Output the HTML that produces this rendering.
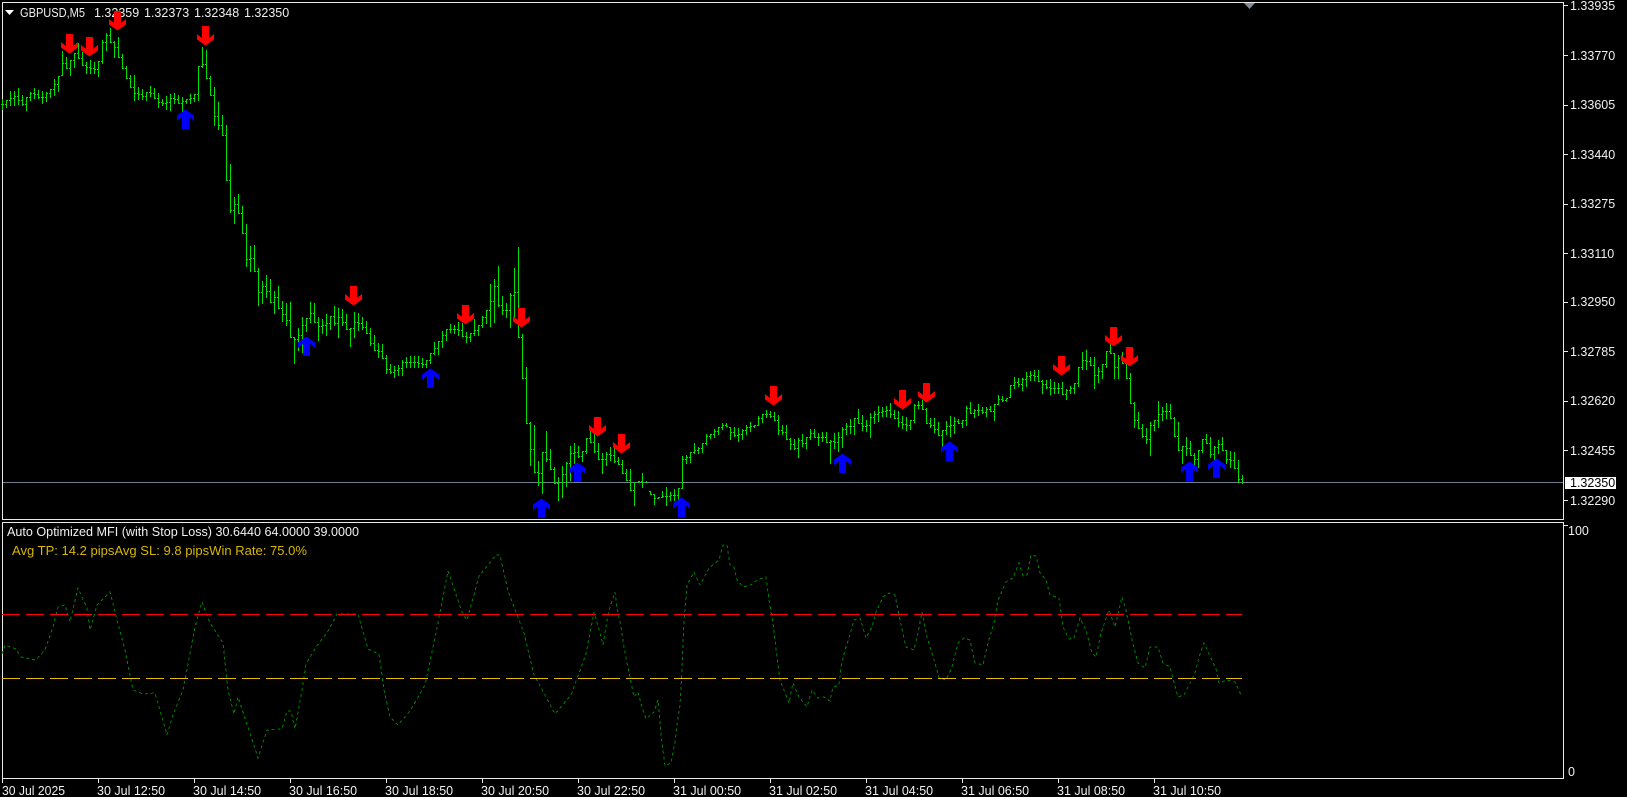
<!DOCTYPE html>
<html><head><meta charset="utf-8"><title>GBPUSD,M5</title>
<style>
html,body{margin:0;padding:0;background:#000;width:1627px;height:797px;overflow:hidden}
svg{position:absolute;left:0;top:0;display:block}
text{font-family:"Liberation Sans",sans-serif;font-size:12.5px;fill:#f0f0f0}
</style></head><body>
<svg width="1627" height="797" viewBox="0 0 1627 797" xmlns="http://www.w3.org/2000/svg">
<defs>
<polygon id="dn" points="-3.5,0 3.5,0 3.5,12 8.5,8 8.5,13.5 0,19.5 -8.5,13.5 -8.5,8 -3.5,12"/>
<polygon id="up" points="0,-0.5 8.5,5.5 8.5,11 3.5,7 3.5,19 -3.5,19 -3.5,7 -8.5,11 -8.5,5.5"/>
</defs>
<g fill="none" stroke="#e8e8e8" stroke-width="1" shape-rendering="crispEdges">
<rect x="2.5" y="2.5" width="1561" height="517"/>
<rect x="2.5" y="522.5" width="1561" height="256"/>
<path d="M1564 5.5h4M1564 55.5h4M1564 105.5h4M1564 154.5h4M1564 204.5h4M1564 253.5h4M1564 302.5h4M1564 351.5h4M1564 401.5h4M1564 450.5h4M1564 500.5h4M1564 525.5h4M2.5 779v4M98.5 779v4M194.5 779v4M290.5 779v4M386.5 779v4M482.5 779v4M578.5 779v4M674.5 779v4M770.5 779v4M866.5 779v4M962.5 779v4M1058.5 779v4M1154.5 779v4"/>
</g>
<polygon points="1244,3 1255,3 1249.5,9" fill="#7f8c99"/>
<path d="M3 482.5H1563" stroke="#708090" stroke-width="1" shape-rendering="crispEdges"/>
<path id="bars" fill="none" stroke="#00e000" stroke-width="1" shape-rendering="crispEdges" d=""/>
<polygon points="5,10 14,10 9.5,15" fill="#fff"/>
<text x="20" y="17" textLength="65" lengthAdjust="spacingAndGlyphs">GBPUSD,M5</text><text x="94" y="17">1.32359</text><text x="144" y="17">1.32373</text><text x="194" y="17">1.32348</text><text x="244" y="17">1.32350</text>
<g fill="#ff0000">
<use href="#dn" x="69.5" y="34"/><use href="#dn" x="89.5" y="37"/><use href="#dn" x="117.5" y="11"/><use href="#dn" x="205.5" y="26"/>
<use href="#dn" x="353.5" y="286"/><use href="#dn" x="465.5" y="305"/><use href="#dn" x="521.5" y="308"/><use href="#dn" x="597.5" y="417"/>
<use href="#dn" x="621.5" y="434"/><use href="#dn" x="773.5" y="386"/><use href="#dn" x="902.5" y="390"/><use href="#dn" x="926.5" y="383"/>
<use href="#dn" x="1061.5" y="356"/><use href="#dn" x="1113.5" y="327"/><use href="#dn" x="1129.5" y="347"/>
</g>
<g fill="#0000ff">
<use href="#up" x="185.5" y="110"/><use href="#up" x="306.5" y="337"/><use href="#up" x="430.5" y="369"/><use href="#up" x="541.5" y="499"/>
<use href="#up" x="577.5" y="463"/><use href="#up" x="681.5" y="498"/><use href="#up" x="842.5" y="454"/><use href="#up" x="949.5" y="442"/>
<use href="#up" x="1189.5" y="462"/><use href="#up" x="1216.5" y="459"/>
</g>
<g>
<text x="1570" y="10">1.33935</text><text x="1570" y="60">1.33770</text><text x="1570" y="109">1.33605</text><text x="1570" y="159">1.33440</text>
<text x="1570" y="208">1.33275</text><text x="1570" y="258">1.33110</text><text x="1570" y="306">1.32950</text><text x="1570" y="356">1.32785</text>
<text x="1570" y="405">1.32620</text><text x="1570" y="455">1.32455</text><text x="1570" y="505">1.32290</text>
</g>
<rect x="1565" y="477" width="51" height="12" fill="#fff"/>
<text x="1570" y="487" style="fill:#000">1.32350</text>
<text x="1568" y="535">100</text><text x="1568" y="776">0</text>
<g>
<text x="2" y="795" textLength="63" lengthAdjust="spacingAndGlyphs">30 Jul 2025</text><text x="97" y="795">30 Jul 12:50</text><text x="193" y="795">30 Jul 14:50</text><text x="289" y="795">30 Jul 16:50</text>
<text x="385" y="795">30 Jul 18:50</text><text x="481" y="795">30 Jul 20:50</text><text x="577" y="795">30 Jul 22:50</text><text x="673" y="795">31 Jul 00:50</text>
<text x="769" y="795">31 Jul 02:50</text><text x="865" y="795">31 Jul 04:50</text><text x="961" y="795">31 Jul 06:50</text><text x="1057" y="795">31 Jul 08:50</text><text x="1153" y="795">31 Jul 10:50</text>
</g>
<text x="7" y="536" textLength="352" lengthAdjust="spacingAndGlyphs">Auto Optimized MFI (with Stop Loss) 30.6440 64.0000 39.0000</text>
<text x="12" y="555" textLength="295" lengthAdjust="spacingAndGlyphs" style="fill:#d8b800">Avg TP: 14.2 pipsAvg SL: 9.8 pipsWin Rate: 75.0%</text>
<polyline fill="none" stroke="#008000" stroke-width="1" stroke-dasharray="3 3" shape-rendering="crispEdges" points="2,654 5,645 16,649 21,657 36,660 45,650 53,627 58,607 65,605 70,622 78,588 87,608 90,630 97,605 110,592 117,620 125,650 133,690 143,694 155,693 167,735 173,715 183,690 192,643 195,627 202,602 210,623 223,643 228,690 234,714 238,697 248,727 258,758 267,730 282,729 287,711 291,711 295,729 302,690 306,664 316,647 327,633 337,614 358,614 368,649 379,654 384,690 390,717 398,725 410,711 425,685 436,633 448,571 462,612 467,620 479,576 496,555 500,555 508,591 524,633 534,675 545,695 555,714 571,695 586,654 594,612 600,633 603,645 605,633 607,620 610,607 615,592 617,608 621,627 624,647 627,663 631,682 634,697 638,692 642,707 646,719 654,712 658,700 661,735 665,766 671,763 675,742 677,725 680,705 682,670 684,620 687,585 694,572 700,585 709,568 719,560 723,545 727,545 730,565 734,567 737,580 743,587 751,585 757,580 766,577 769,600 773,623 777,657 780,680 789,703 793,683 799,697 807,707 812,690 818,698 824,697 830,701 833,687 839,685 841,667 845,650 849,638 854,620 860,618 866,638 872,627 876,612 883,597 889,593 895,595 900,620 906,647 914,650 918,633 922,612 927,637 935,663 939,678 946,680 952,667 958,643 964,638 970,640 975,663 983,665 988,643 994,623 998,600 1006,582 1013,578 1019,563 1023,576 1027,575 1031,555 1036,556 1040,573 1046,580 1050,595 1059,598 1063,627 1069,639 1074,638 1080,618 1086,630 1092,653 1096,657 1101,633 1109,610 1115,627 1122,597 1126,610 1132,640 1138,663 1145,668 1150,647 1158,647 1163,663 1170,667 1178,697 1184,695 1195,673 1199,657 1204,643 1209,654 1216,669 1219,683 1227,680 1235,682 1242,697"/>
<path d="M2 614.5H1242" stroke="#ff0000" stroke-width="1" stroke-dasharray="18 6" shape-rendering="crispEdges"/>
<path d="M2 678.5H1242" stroke="#e6bc00" stroke-width="1" stroke-dasharray="18 6" shape-rendering="crispEdges"/>
</svg>
<script>
var D=[99,109,100,107,91,105,91,105,88,104,95,105,97,110,92,100,88,98,90,98,91,103,92,101,89,97,79,95,76,91,51,75,57,68,60,75,53,67,43,58,52,65,62,73,60,73,62,73,61,76,40,63,33,50,28,42,41,57,37,57,54,68,66,78,75,87,75,100,87,99,89,99,92,100,86,96,88,98,93,107,99,105,96,109,94,110,93,103,95,103,97,113,99,103,94,103,94,101,66,100,47,67,50,78,76,95,87,125,102,129,115,135,125,180,164,212,197,223,194,213,206,233,224,266,246,271,245,271,268,305,
281,303,275,297,279,302,291,313,286,308,301,321,303,325,302,337,337,363,328,350,317,352,318,331,302,322,303,322,317,340,319,333,314,335,316,329,306,325,308,337,309,325,314,329,328,346,312,337,313,330,317,329,321,333,328,345,335,350,343,357,344,358,355,373,364,373,366,377,365,375,360,375,357,367,356,367,356,367,356,367,358,367,360,367,353,363,342,354,341,354,331,347,329,340,324,332,325,333,322,335,323,336,332,342,333,341,319,335,325,335,316,327,310,323,284,326,279,322,266,306,296,314,303,317,293,327,268,321,247,337,334,378,367,423,422,465,425,472,461,485,452,493,431,461,449,469,467,483,477,500,466,497,462,486,446,480,443,463,446,457,451,461,438,453,427,442,432,452,443,459,453,473,452,465,447,460,448,462,457,464,460,473,469,480,469,490,482,505,481,482,473,487,481,482,491,494,494,504,497,498,491,497,487,505,492,500,489,500,488,502,
456,488,455,463,452,462,443,453,447,453,443,452,434,444,434,438,429,437,427,434,423,429,423,426,427,439,427,436,428,441,429,439,425,434,422,431,425,427,416,425,414,422,410,417,411,417,412,420,415,434,425,434,425,439,438,449,439,449,438,457,434,446,437,448,429,439,429,437,433,445,432,441,432,442,440,463,433,448,432,451,427,447,423,434,419,433,418,434,409,423,415,430,420,431,413,437,411,423,406,421,407,416,406,416,403,417,410,418,411,426,416,428,417,430,420,429,404,422,401,408,400,409,408,423,418,427,418,432,422,435,430,450,421,434,416,436,417,433,419,423,420,427,406,425,402,413,409,417,404,415,407,413,407,416,406,411,404,420,395,404,396,401,398,401,385,397,377,388,378,386,378,390,372,386,371,380,370,380,370,381,380,393,380,388,379,394,382,393,383,393,382,394,389,399,386,393,383,393,367,386,352,369,350,369,357,365,357,388,367,382,364,378,351,367,343,353,353,378,355,378,352,363,358,378,373,403,402,427,412,428,424,437,428,443,422,455,420,430,401,427,407,420,403,418,404,418,417,436,422,450,446,463,437,455,441,455,453,467,450,467,439,452,434,443,437,457,446,462,440,453,437,450,450,463,451,467,452,468,460,482,475,483];
var n=D.length/2,p="",pc=null;
function cl(v,a,b){return Math.max(a,Math.min(b,v))}
for(var i=0;i<n;i++){var x=2+4*i,h=D[2*i],l=D[2*i+1];
 p+="M"+(x+.5)+" "+h+"V"+(l+1);
 var o=pc===null?Math.round((h+l)/2):cl(pc,h,l);
 var c;
 if(i<n-1){c=cl(Math.round((D[2*i+2]+D[2*i+3])/2),h,l)}else{c=l-1}
 p+="M"+(x-1)+" "+(o+.5)+"h1M"+(x+1)+" "+(c+.5)+"h1";
 pc=c;}
document.getElementById("bars").setAttribute("d",p);
</script>
</body></html>
